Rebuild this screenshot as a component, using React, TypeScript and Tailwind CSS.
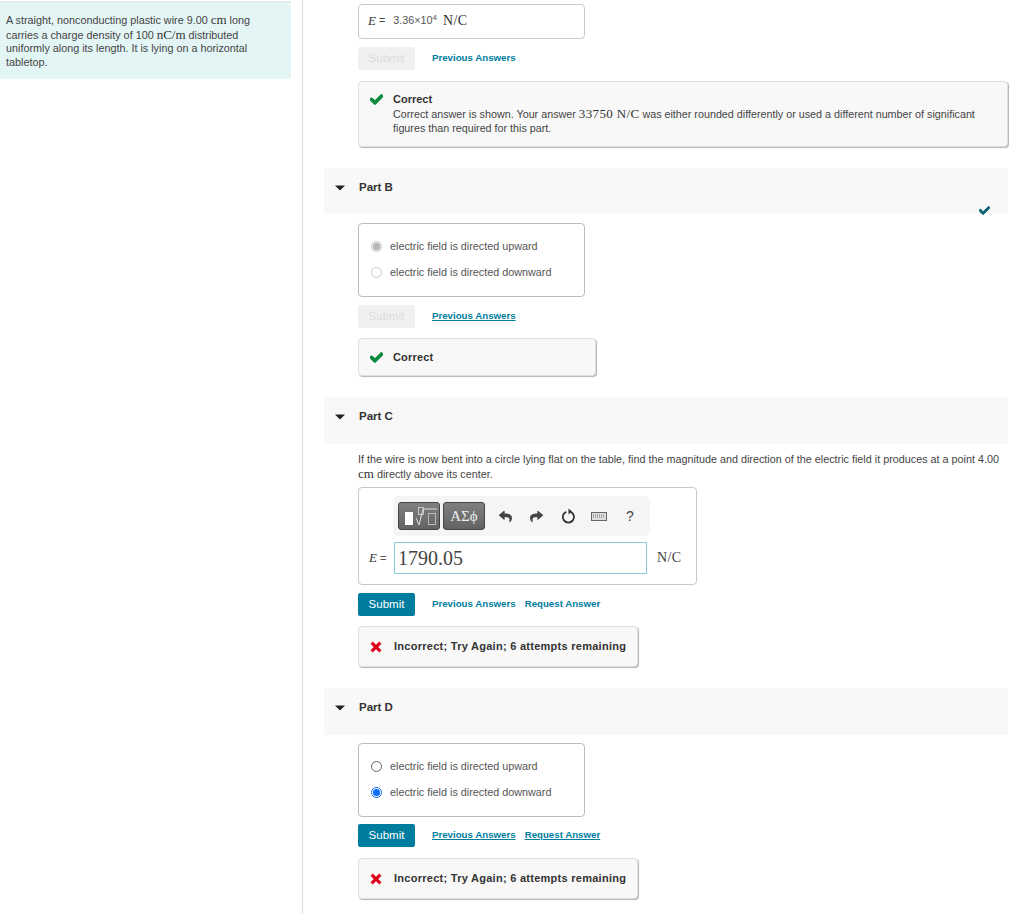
import React from "react";
import { FaReply, FaShare, FaCheck, FaTimes } from "react-icons/fa";

const M = ({ children, cls = "" }: { children: React.ReactNode; cls?: string }) => (
  <span className={`font-['Liberation_Serif',serif] leading-none text-[13px] text-[#333] ${cls}`}>{children}</span>
);

const Link = ({ children, under }: { children: React.ReactNode; under?: boolean }) => (
  <span className={`text-[9.7px] leading-[12px] font-bold text-[#007d9f] ${under ? "underline" : ""}`}>{children}</span>
);

const SubmitRow = ({ on, under, request, mt }: { on?: boolean; under?: boolean; request?: boolean; mt: string }) => (
  <div className={`flex items-center h-[23px] ${mt}`}>
    <div
      className={`w-[57px] h-[23px] rounded-[2px] flex items-center justify-center text-[11.5px] ${
        on ? "bg-[#007c9f] text-white" : "bg-[#f0f0f0] text-[#dcdcdc]"
      }`}
    >
      Submit
    </div>
    <div className="ml-[17px] mb-[1px] flex gap-[9px]">
      <Link under={under}>Previous Answers</Link>
      {request && <Link under={under}>Request Answer</Link>}
    </div>
  </div>
);

const Check = ({ cls, size }: { cls: string; size: number }) => (
  <FaCheck className={cls} size={size} stroke="currentColor" strokeWidth={40} />
);

const PartHeader = ({ label, mt, h = "h-[47px]", check }: { label: string; mt: string; h?: string; check?: boolean }) => (
  <div className={`relative flex items-start bg-[#f8f8f8] ${h} ${mt}`}>
    <svg className="ml-[11px] mt-[17px]" width="10" height="6" viewBox="0 0 10 6">
      <path d="M0 0.5H10L5 5.5Z" fill="#222" />
    </svg>
    <span className="ml-[14px] mt-[12px] text-[11.5px] leading-[15px] font-bold text-[#333]">{label}</span>
    {check && <Check cls="absolute right-[18px] top-[37px] text-[#0b5f73]" size={11} />}
  </div>
);

const Radio = ({ state }: { state: "grayOn" | "grayOff" | "off" | "blue" }) => {
  const border =
    state === "blue" ? "border-[#0a6cf5]" : state === "off" ? "border-[#666]" : "border-[#c8c8c8]";
  const dot = state === "blue" ? "bg-[#0a6cf5]" : state === "grayOn" ? "bg-[#b5b5b5]" : "";
  return (
    <span className={`w-[11px] h-[11px] rounded-full border flex items-center justify-center ${border} ${state === "grayOn" ? "bg-[#e8e8e8]" : ""}`}>
      {dot && <span className={`w-[7px] h-[7px] rounded-full ${dot}`} />}
    </span>
  );
};

const RadioBox = ({ up, down, mt }: { up: "grayOn" | "off"; down: "grayOff" | "blue"; mt: string }) => (
  <div className={`w-[227px] h-[74px] border border-[#bdbdbd] rounded-[4px] bg-white pl-[12px] pt-[15px] flex flex-col gap-[12px] ${mt}`}>
    {[
      [up, "electric field is directed upward"],
      [down, "electric field is directed downward"],
    ].map(([s, t]) => (
      <div key={t} className="flex items-center gap-[8px] h-[14px]">
        <Radio state={s as "off"} />
        <span className="text-[10.8px] leading-[14px] text-[#555]">{t}</span>
      </div>
    ))}
  </div>
);

const Feedback = ({ w, h, mt, children }: { w: string; h: string; mt: string; children: React.ReactNode }) => (
  <div className={`${w} ${h} ${mt} bg-[#f8f8f8] rounded-[4px] border border-[#dedede] shadow-[1px_1px_1px_#b5b5b5] flex items-center`}>
    {children}
  </div>
);

const Incorrect = ({ mt }: { mt: string }) => (
  <Feedback w="w-[280px]" h="h-[41px]" mt={mt}>
    <FaTimes className="ml-[10px] text-[#e0001b]" size={14} stroke="currentColor" strokeWidth={30} />
    <span className="ml-[11px] text-[11px] font-bold text-[#333] tracking-[0.27px]">Incorrect; Try Again; 6 attempts remaining</span>
  </Feedback>
);

export default function App() {
  return (
    <div className="w-[1024px] h-[914px] overflow-hidden bg-white flex font-['Liberation_Sans',Arial,sans-serif]">
      <div className="w-[303px] shrink-0 border-r border-[#d5dee6] pr-[11px] pt-px">
        <div className="h-[78px] bg-[#e4f5f6] border-t border-[#dfe5e8] pl-[6px] pr-[20px] pt-[11px] text-[10.8px] leading-[13.5px] text-[#444]">
          A straight, nonconducting plastic wire 9.00 <M cls="text-[12px]">cm</M> long carries a charge density of 100{" "}
          <M cls="text-[12px]">nC/m</M> distributed uniformly along its length. It is lying on a horizontal tabletop.
        </div>
      </div>
      <div className="ml-[21px] w-[684px]">
        <div className="ml-[34px]">
          <div className="mt-[4px] w-[227px] h-[35px] border border-[#c8c8c8] rounded-[4px] flex items-center pl-[9px] pb-[2px]">
            <M cls="italic text-[11px]">E</M>
            <span className="text-[10.8px] text-[#444] ml-[3px]">=</span>
            <span className="text-[10.8px] text-[#555] ml-[8px]">
              3.36×10<sup className="text-[8px]">4</sup>
            </span>
            <M cls="ml-[6px] text-[14px] tracking-[0.4px]">N/C</M>
          </div>
          <SubmitRow mt="mt-[8px]" />
          <div className="mt-[11px] h-[66px] bg-[#f8f8f8] rounded-[4px] border border-[#dedede] shadow-[1px_1px_1px_#b5b5b5] flex">
            <Check cls="ml-[11px] mt-[11px] text-[#0a8a3c]" size={13} />
            <div className="ml-[10px] mt-[10px] text-[10.75px] leading-[14.5px] text-[#444]">
              <div className="font-bold text-[11px] text-[#333]">Correct</div>
              <div className="w-[600px]">
                Correct answer is shown. Your answer <M cls="text-[13.5px] tracking-[0.35px]">33750 N/C</M> was either rounded differently or used a different number of significant figures than required for this part.
              </div>
            </div>
          </div>
        </div>

        <PartHeader label="Part B" mt="mt-[21px]" h="h-[46px]" check />
        <div className="ml-[34px]">
          <RadioBox up="grayOn" down="grayOff" mt="mt-[9px]" />
          <SubmitRow mt="mt-[8px]" under />
          <Feedback w="w-[238px]" h="h-[38px]" mt="mt-[10px]">
            <Check cls="ml-[11px] text-[#0a8a3c]" size={13} />
            <span className="ml-[10px] text-[11px] font-bold text-[#333] tracking-[0.18px]">Correct</span>
          </Feedback>
        </div>

        <PartHeader label="Part C" mt="mt-[21px]" />
        <div className="ml-[34px]">
          <div className="mt-[9px] text-[10.8px] leading-[13.5px] text-[#444] w-[645px]">
            If the wire is now bent into a circle lying flat on the table, find the magnitude and direction of the electric field it produces at a point 4.00 <M cls="text-[11.5px]">cm</M> directly above its center.
          </div>
          <div className="mt-[6px] w-[339px] h-[98px] border border-[#c8c8c8] rounded-[4px] pt-[8px]">
            <div className="ml-[34px] w-[257px] h-[40px] bg-[#f5f5f5] rounded-[5px] flex items-center pl-[5px] text-[#444]">
              <div className="relative w-[42px] h-[28px] rounded-[3px] border border-[#444] bg-gradient-to-b from-[#808080] to-[#636363] overflow-hidden">
                <svg className="absolute inset-0" width="40" height="26" viewBox="0 0 40 26">
                  <rect x="6" y="9" width="8" height="13" fill="#fff" />
                  <rect x="19.5" y="4.5" width="5" height="7" fill="none" stroke="#ddd" strokeWidth="0.8" />
                  <path d="M17 15l3 7 4-16h14" fill="none" stroke="#ddd" strokeWidth="1" />
                  <rect x="29.5" y="10.5" width="7" height="11" fill="none" stroke="#bbb" strokeWidth="1" />
                </svg>
              </div>
              <div className="ml-[3px] w-[42px] h-[28px] rounded-[3px] border border-[#444] bg-gradient-to-b from-[#808080] to-[#636363] flex items-center justify-center font-['Liberation_Serif',serif] text-[15px] text-[#eee]">
                ΑΣϕ
              </div>
              <FaReply className="ml-[14px]" size={13} />
              <FaShare className="ml-[18px]" size={13} />
              <svg className="ml-[18px]" width="15" height="16" viewBox="0 0 15 16" fill="none">
                <path d="M9.6 3.8a5.6 5.6 0 1 1-4.4 0" stroke="#333" strokeWidth="1.8" />
                <path d="M7.5 0.5L11 3.5L7.5 6.5Z" fill="#333" />
              </svg>
              <svg className="ml-[15px]" width="16" height="9" viewBox="0 0 16 9" fill="none">
                <rect x="0.5" y="0.5" width="15" height="8" fill="#ddd" stroke="#666" />
                <path d="M2 3h12M2 5h12" stroke="#777" strokeDasharray="1 1" />
              </svg>
              <span className="ml-[19px] text-[14px]">?</span>
            </div>
            <div className="mt-[6px] flex items-center">
              <span className="ml-[10px] w-[25px] text-[11px] text-[#555]">
                <M cls="italic text-[11px]">E</M> =
              </span>
              <div className="w-[253px] h-[32px] border border-[#8ccbdc] flex items-center pl-[3px] font-['Liberation_Serif',serif] text-[20px] text-[#444]">
                1790.05
              </div>
              <M cls="ml-[10px] text-[#444] text-[14px] tracking-[0.4px]">N/C</M>
            </div>
          </div>
          <SubmitRow on mt="mt-[8px]" request />
          <Incorrect mt="mt-[10px]" />
        </div>

        <PartHeader label="Part D" mt="mt-[21px]" />
        <div className="ml-[34px]">
          <RadioBox up="off" down="blue" mt="mt-[8px]" />
          <SubmitRow on under request mt="mt-[7px]" />
          <Incorrect mt="mt-[11px]" />
        </div>
      </div>
    </div>
  );
}
